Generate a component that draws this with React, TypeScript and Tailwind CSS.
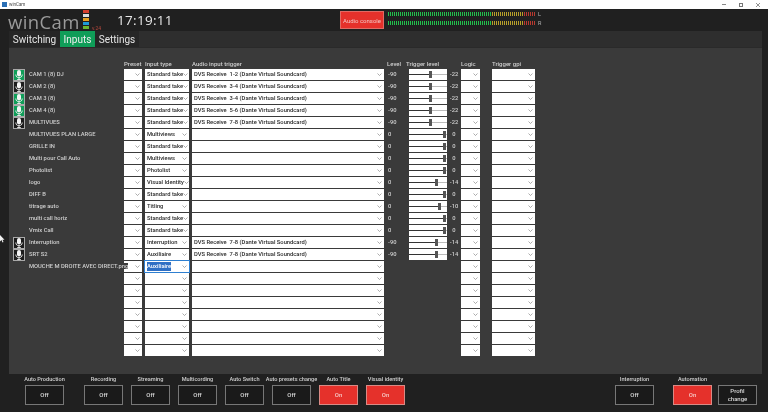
import React from "react";

type Row = { name: string; mic?: "g" | "b"; type?: string; audio?: string; level?: string; pos?: number; val?: string; sel?: boolean };

const rows: Row[] = [
  { name: "CAM 1 (8) DJ", mic: "g", type: "Standard take", audio: "DVS Receive  1-2 (Dante Virtual Soundcard)", level: "-90", pos: 54, val: "-22" },
  { name: "CAM 2 (8)", mic: "b", type: "Standard take", audio: "DVS Receive  3-4 (Dante Virtual Soundcard)", level: "-90", pos: 54, val: "-22" },
  { name: "CAM 3 (8)", mic: "g", type: "Standard take", audio: "DVS Receive  3-4 (Dante Virtual Soundcard)", level: "-90", pos: 54, val: "-22" },
  { name: "CAM 4 (8)", mic: "g", type: "Standard take", audio: "DVS Receive  5-6 (Dante Virtual Soundcard)", level: "-90", pos: 54, val: "-22" },
  { name: "MULTIVUES", mic: "b", type: "Standard take", audio: "DVS Receive  7-8 (Dante Virtual Soundcard)", level: "-90", pos: 54, val: "-22" },
  { name: "MULTIVUES PLAN LARGE", type: "Multiviews", level: "0", pos: 97, val: "0" },
  { name: "GRILLE IN", type: "Standard take", level: "0", pos: 97, val: "0" },
  { name: "Multi pour Call Auto", type: "Multiviews", level: "0", pos: 97, val: "0" },
  { name: "Photolist", type: "Photolist", level: "0", pos: 97, val: "0" },
  { name: "logo", type: "Visual Identity", level: "0", pos: 70, val: "-14" },
  { name: "DIFF B", type: "Standard take", level: "0", pos: 97, val: "0" },
  { name: "titrage auto", type: "Titling", level: "0", pos: 78, val: "-10" },
  { name: "multi call horiz", type: "Standard take", level: "0", pos: 97, val: "0" },
  { name: "Vmix Call", type: "Standard take", level: "0", pos: 97, val: "0" },
  { name: "Interruption", mic: "b", type: "Interruption", audio: "DVS Receive  7-8 (Dante Virtual Soundcard)", level: "-90", pos: 70, val: "-14" },
  { name: "SRT S2", mic: "b", type: "Auxiliaire", audio: "DVS Receive  7-8 (Dante Virtual Soundcard)", level: "-90", pos: 70, val: "-14" },
  { name: "MOUCHE M DROITE AVEC DIRECT.png", type: "Auxiliaire", sel: true },
  ...Array.from({ length: 7 }, () => ({ name: "" })),
];

function Mic({ kind }: { kind: "g" | "b" }) {
  return (
    <div className={`w-[12px] h-[12px] flex items-center justify-center border border-[#a8a8a8] shrink-0 ${kind === "g" ? "bg-[#0f9d58] border-[#0f9d58]" : "bg-[#1c1c1c]"}`}>
      <svg width="8" height="10" viewBox="0 0 8 10">
        <rect x="2" y="0" width="4" height="6.5" rx="2" fill="#f4f4f4" />
        <path d="M0.8 4.5c0 2.2 1.4 3.2 3.2 3.2s3.2-1 3.2-3.2M4 7.7v1.5M2.2 9.5h3.6" stroke="#f4f4f4" strokeWidth="0.9" fill="none" />
      </svg>
    </div>
  );
}

function Select({ w, text, sel }: { w: string; text?: string; sel?: boolean }) {
  return (
    <div className={`${w} h-[11px] bg-white flex items-center justify-between shrink-0 pl-[2px] pr-[2px] ${sel ? "outline outline-1 outline-[#2f7fd0]" : ""}`}>
      <span className={`text-[5.8px] leading-[9px] font-medium whitespace-pre ${sel ? "bg-[#2f6fc4] text-white" : "text-[#2a2a2a]"}`}>{text ?? ""}</span>
      <svg width="5" height="3" viewBox="0 0 5 3" className="shrink-0">
        <path d="M0.5 0.5 2.5 2.5 4.5 0.5" stroke="#888" strokeWidth="0.7" fill="none" />
      </svg>
    </div>
  );
}

function Slider({ pos }: { pos: number }) {
  return (
    <div className="w-[38px] h-[11px] bg-white relative shrink-0">
      <div className="absolute left-0 right-0 top-[5px] h-px bg-[#bbb]" />
      <div className="absolute left-0 top-[5px] h-px bg-[#333]" style={{ width: `${pos}%` }} />
      <div className="absolute top-[2px] w-[3px] h-[7px] bg-[#555]" style={{ left: `${pos}%`, marginLeft: pos > 90 ? -3 : -1 }} />
    </div>
  );
}

function Toggle({ label, on, text, className = "" }: { label?: string; on?: boolean; text?: string; className?: string }) {
  return (
    <div className={`w-[39px] shrink-0 flex flex-col items-center ${className}`}>
      <span className="h-[11px] text-[5.6px] leading-[11px] font-medium whitespace-nowrap text-[#d0d0d0]">{label ?? ""}</span>
      <div className={`w-[39px] h-[20px] border flex items-center justify-center text-center text-[6px] leading-[8px] font-medium px-[8px] ${on ? "bg-[#e5312b] border-[#d98a85] text-[#f6c9c6]" : "bg-[#1a1a1a] border-[#777] text-[#d8d8d8]"}`}>
        {text ?? (on ? "On" : "Off")}
      </div>
    </div>
  );
}

function Meter({ label }: { label: string }) {
  return (
    <div className="flex items-center gap-[2px]">
      <div className="w-[148px] h-[4px] relative flex">
        <div className="w-[103px] bg-[#22c04c]" />
        <div className="w-[32px] bg-[#b8a02a]" />
        <div className="w-[13px] bg-[#b93a30]" />
        <div className="absolute inset-0 bg-[repeating-linear-gradient(90deg,transparent_0,transparent_1.5px,#1f1f1f_1.5px,#1f1f1f_2px)]" />
      </div>
      <span className="text-[5.5px] leading-[6px] text-[#b0b0b0]">{label}</span>
    </div>
  );
}

export default function App() {
  return (
    <div className="w-[768px] h-[412px] overflow-hidden bg-[#202020] flex flex-col relative font-['Roboto',sans-serif] blur-[0.4px]">
      {/* Title bar */}
      <div className="h-[9px] bg-white flex items-center shrink-0 pl-[2px]">
        <div className="w-[5px] h-[5px] bg-[#2a6fb5]" />
        <span className="ml-[2px] text-[4.5px] leading-[9px] text-[#444]">winCam</span>
        <div className="ml-auto flex items-center gap-[13px] pr-[8px] text-[#666]">
          <div className="w-[4px] h-px bg-[#888]" />
          <div className="w-[4px] h-[4px] border border-[#777]" />
          <svg width="4" height="4" viewBox="0 0 4 4"><path d="M0 0 4 4M4 0 0 4" stroke="#777" strokeWidth="0.8" /></svg>
        </div>
      </div>

      {/* Header */}
      <div className="h-[22px] shrink-0 flex items-start pl-[8px]">
        <span className="w-[75px] shrink-0 text-[18.5px] leading-[26px] tracking-[0.4px] text-[#9a9a9a] font-['Open_Sans',sans-serif]">winCam</span>
        <div className="flex flex-col gap-[1px] mt-[1px] w-[9px] shrink-0">
          <div className="w-[6px] h-[3px] bg-[#d6402f]" />
          <div className="w-[6px] h-[3px] bg-[#dcdcdc]" />
          <div className="w-[6px] h-[3px] bg-[#e8a020]" />
          <div className="w-[6px] h-[3px] bg-[#1f9ad6]" />
          <div className="w-[6px] h-[3px] bg-[#6ab82f]" />
        </div>
        <span className="mt-[16px] text-[5px] leading-[6px] text-[#b5483c] w-[25px] shrink-0">v.24</span>
        <span className="mt-[2px] text-[13.5px] leading-[18px] tracking-[0.3px] text-[#e8e8e8] w-[223px] shrink-0 font-['Open_Sans',sans-serif]">17:19:11</span>
        <div className="mt-[2px] w-[44px] h-[18px] bg-[#e5312b] border border-[#e06a64] flex items-center justify-center text-[6px] text-[#f3c4c0] shrink-0">Audio console</div>
        <div className="ml-[4px] mt-[2px] flex flex-col gap-[3px]">
          <Meter label="L" />
          <Meter label="R" />
        </div>
      </div>

      {/* Tabs */}
      <div className="h-[16px] shrink-0 flex items-stretch pl-[9px] pr-[6px]">
        <div className="w-[51px] flex items-center justify-center text-[10px] text-[#e6e6e6] bg-[#262626]">Switching</div>
        <div className="w-[35px] flex items-center justify-center text-[10px] text-[#eee] bg-[#0f9d58]">Inputs</div>
        <div className="w-[44px] flex items-center justify-center text-[10px] text-[#e6e6e6] bg-[#262626]">Settings</div>
        <div className="flex-1 bg-[#2e2e2e]" />
      </div>

      {/* Panel */}
      <div className="flex-1 min-h-0 ml-[9px] mr-[6px] bg-[#3a3a3a] border-t border-[#2a2a2a] pt-[11px]">
        <div className="h-[9px] flex items-center text-[6px] leading-[9px] font-medium text-[#cfcfcf] whitespace-nowrap">
          <span className="w-[115px] shrink-0" />
          <span className="w-[21px] shrink-0">Preset</span>
          <span className="w-[47px] shrink-0">Input type</span>
          <span className="w-[195px] shrink-0">Audio input trigger</span>
          <span className="w-[19px] shrink-0">Level</span>
          <span className="w-[55px] shrink-0">Trigger level</span>
          <span className="w-[31px] shrink-0">Logic</span>
          <span>Trigger gpi</span>
        </div>
        <div className="mt-[1px] flex flex-col gap-[1px]">
          {rows.map((r, i) => (
            <div key={i} className="h-[11px] flex items-center text-[5.8px] font-medium text-[#cfcfcf] whitespace-nowrap">
              <div className="w-[20px] shrink-0 pl-[4px] flex items-center">{r.mic && <Mic kind={r.mic} />}</div>
              <div className="w-[94.5px] shrink-0 relative z-10">
                <span className="bg-[#3a3a3a]">{r.name}</span>
              </div>
              <Select w="w-[18.5px]" />
              <div className="w-[3px] shrink-0" />
              <Select w="w-[44px]" text={r.type} sel={r.sel} />
              <div className="w-[3px] shrink-0" />
              <Select w="w-[192px]" text={r.audio} />
              <span className="w-[25px] shrink-0 pl-[4px]">{r.level ?? ""}</span>
              {r.pos !== undefined ? <Slider pos={r.pos} /> : <div className="w-[38px] h-[11px] shrink-0" />}
              <span className="w-[14px] shrink-0 text-center">{r.val ?? ""}</span>
              <Select w="w-[19px]" />
              <div className="w-[12px] shrink-0" />
              <Select w="w-[43px]" />
            </div>
          ))}
        </div>
      </div>

      {/* Bottom bar */}
      <div className="h-[38px] shrink-0 flex items-start pl-[25px]">
        <Toggle label="Auto Production" />
        <Toggle label="Recording" className="ml-[20px]" />
        <Toggle label="Streaming" className="ml-[8px]" />
        <Toggle label="Multicording" className="ml-[8px]" />
        <Toggle label="Auto Switch" className="ml-[8px]" />
        <Toggle label="Auto presets change" className="ml-[8px]" />
        <Toggle label="Auto Title" on className="ml-[8px]" />
        <Toggle label="Visual identity" on className="ml-[8px]" />
        <Toggle label="Interruption" className="ml-[210px]" />
        <Toggle label="Automation" on className="ml-[19px]" />
        <Toggle text="Profil change" className="ml-[6px]" />
      </div>

      {/* Mouse pointer */}
      <svg width="5" height="8" viewBox="0 0 5 8" className="absolute left-0 top-[235px]">
        <path d="M0 0v6.5L1.5 5l1 2.5 1-.5-1-2.3h2z" fill="#f2f2f2" />
      </svg>
    </div>
  );
}
